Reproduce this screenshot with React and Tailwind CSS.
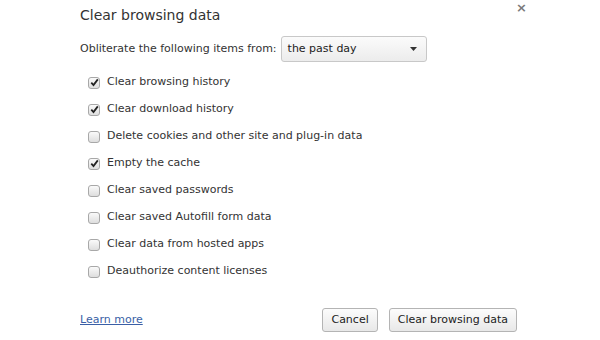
import React, { useState } from "react";

const items = [
  { label: "Clear browsing history", checked: true },
  { label: "Clear download history", checked: true },
  { label: "Delete cookies and other site and plug-in data", checked: false },
  { label: "Empty the cache", checked: true },
  { label: "Clear saved passwords", checked: false },
  { label: "Clear saved Autofill form data", checked: false },
  { label: "Clear data from hosted apps", checked: false },
  { label: "Deauthorize content licenses", checked: false },
];

const CheckBox = ({ checked, onToggle }) => (
  <button
    onClick={onToggle}
    className="w-[12px] h-[12px] rounded-[3px] border border-[#a8a8a8] bg-gradient-to-b from-[#fafafa] to-[#dedede] flex items-center justify-center shrink-0"
  >
    {checked && (
      <svg width="9" height="9" viewBox="0 0 9 9">
        <path d="M1.3 4.6 L3.5 7 L7.8 1.4" fill="none" stroke="#222" strokeWidth="1.8" />
      </svg>
    )}
  </button>
);

const App = () => {
  const [checks, setChecks] = useState(items.map((i) => i.checked));

  const toggle = (idx) =>
    setChecks((prev) => prev.map((c, i) => (i === idx ? !c : c)));

  return (
    <div
      className="w-[600px] h-[340px] bg-white relative text-[#333] overflow-hidden"
      style={{ fontFamily: '"DejaVu Sans", "Liberation Sans", sans-serif' }}
    >
      <span className="absolute left-[516px] top-[-2px] text-[#7a7a7a] text-[13px] font-bold">×</span>

      <div className="pl-[80px] pr-[83px] pt-[4px]">
        <h1 className="text-[14px] text-[#333] h-[22px] leading-[22px]">Clear browsing data</h1>

        <div className="mt-[10px] flex items-center gap-[4px] text-[11px]">
          <span>Obliterate the following items from:</span>
          <div className="w-[146px] h-[26px] rounded-[3px] border border-[#c8c8c8] bg-gradient-to-b from-[#fbfbfb] to-[#ececec] flex items-center justify-between pl-[6px] pr-[9px]">
            <span className="text-[#222]">the past day</span>
            <svg width="7" height="4" viewBox="0 0 7 4">
              <path d="M0 0 L7 0 L3.5 4 Z" fill="#333" />
            </svg>
          </div>
        </div>

        <div className="mt-[7px] pl-[8px] flex flex-col">
          {items.map((item, idx) => (
            <label key={item.label} className="h-[27px] flex items-center gap-[7px] text-[11px] cursor-default">
              <CheckBox checked={checks[idx]} onToggle={() => toggle(idx)} />
              <span>{item.label}</span>
            </label>
          ))}
        </div>

        <div className="mt-[23px] flex items-center justify-between">
          <a href="#" className="text-[11px] text-[#3a5fa6] underline">
            Learn more
          </a>
          <div className="flex gap-[11px]">
            <button className="h-[24px] px-[8px] rounded-[3px] border border-[#b4b4b4] bg-gradient-to-b from-[#fcfcfc] to-[#e8e8e8] text-[11px] text-[#222]">
              Cancel
            </button>
            <button className="h-[24px] px-[8px] rounded-[3px] border border-[#b4b4b4] bg-gradient-to-b from-[#fcfcfc] to-[#e8e8e8] text-[11px] text-[#222]">
              Clear browsing data
            </button>
          </div>
        </div>
      </div>
    </div>
  );
};

export default App;
